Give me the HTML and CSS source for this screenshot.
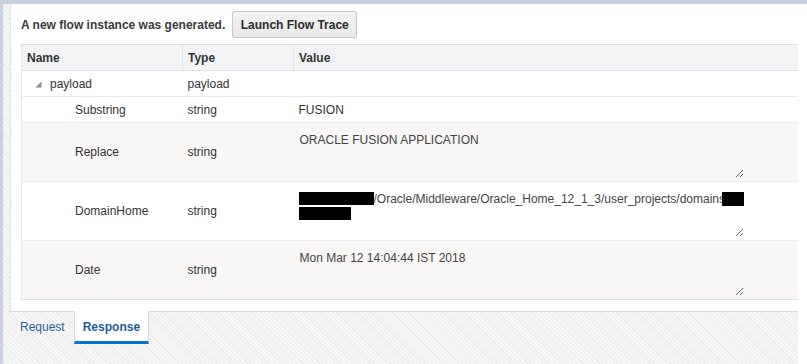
FILE: index.html
```html
<!DOCTYPE html>
<html>
<head>
<meta charset="utf-8">
<link rel="stylesheet" href="styles.css">
</head>
<body>
<div class="topband"></div>
<div class="page">
  <div class="rail"></div>
  <div class="workspace">
    <div class="panel">
      <div class="toolbar">
        <span class="msg">A new flow instance was generated.</span>
        <button class="btn">Launch Flow Trace</button>
      </div>
      <table class="grid">
        <colgroup><col class="c-name"><col class="c-type"><col class="c-value"></colgroup>
        <thead>
          <tr><th>Name</th><th>Type</th><th>Value</th></tr>
        </thead>
        <tbody>
          <tr class="short">
            <td><span class="tw"><svg width="7" height="7" viewBox="0 0 7 7"><polygon points="6.5,0.5 6.5,6.5 0.5,6.5" fill="#8c8c8c"/></svg></span><span class="pl">payload</span></td>
            <td>payload</td>
            <td></td>
          </tr>
          <tr class="short">
            <td class="child">Substring</td>
            <td>string</td>
            <td>FUSION</td>
          </tr>
          <tr class="tall alt">
            <td class="child">Replace</td>
            <td>string</td>
            <td class="val"><div class="ta">ORACLE FUSION APPLICATION</div></td>
          </tr>
          <tr class="tall">
            <td class="child">DomainHome</td>
            <td>string</td>
            <td class="val"><div class="ta"><span class="red r1"></span>/Oracle/Middleware/Oracle_Home_12_1_3/user_projects/domains<span class="red r2"></span> <span class="red r3"></span></div></td>
          </tr>
          <tr class="tall alt">
            <td class="child">Date</td>
            <td>string</td>
            <td class="val"><div class="ta">Mon Mar 12 14:04:44 IST 2018</div></td>
          </tr>
        </tbody>
      </table>
    </div>
    <div class="tabs">
      <div class="tab">Request</div>
      <div class="tab active">Response</div>
    </div>
  </div>
</div>
</body>
</html>
```

FILE: styles.css
```css
html, body {
  margin: 0;
  padding: 0;
  background: #ffffff;
  font-family: "Liberation Sans", Arial, sans-serif;
  font-size: 12px;
  color: #333333;
}
.topband {
  height: 4px;
  background: #c6d0e0;
}
.page {
  display: flex;
  height: 360px;
}
.rail {
  width: 3px;
  background: #c8d2e3;
}
.workspace {
  width: 795px;
  background: repeating-linear-gradient(45deg, #f6f6f6 0px, #f6f6f6 2px, #ebebeb 2px, #ebebeb 3px);
}
.panel {
  margin-left: 7px;
  background: #ffffff;
  border-left: 1px solid #dfe4e8;
  border-bottom: 1px solid #d5dde2;
  padding: 7px 0 11px 10px;
}
.toolbar {
  display: flex;
  align-items: center;
  gap: 7px;
  height: 27px;
  margin-bottom: 6px;
}
.msg {
  font-weight: bold;
  color: #3a3a3a;
}
.btn {
  height: 27px;
  width: 125px;
  padding: 0;
  white-space: nowrap;
  font-family: "Liberation Sans", Arial, sans-serif;
  font-size: 12px;
  font-weight: bold;
  color: #2b2b2b;
  background: linear-gradient(#f4f4f4, #e8e8e8);
  border: 1px solid #c6c9cc;
  border-radius: 2px;
}
.grid {
  width: 777px;
  border-collapse: collapse;
  table-layout: fixed;
  border-left: 1px solid #e3e7e8;
  border-bottom: 1px solid #dde3e3;
}
.c-name { width: 161px; }
.c-type { width: 111px; }
.grid th {
  height: 25px;
  text-align: left;
  font-weight: bold;
  color: #333;
  background: #f2f3f4;
  border-top: 1px solid #d9e2e2;
  border-bottom: 1px solid #d9e2e2;
  border-left: 1px solid #e1e7e7;
  padding: 0 5px;
}
.grid th:first-child { border-left: none; }
.grid td {
  padding: 0 5px;
  border-top: 1px solid #e8eaeb;
  vertical-align: middle;
  color: #333;
}
.grid tbody tr:first-child td { border-top: none; }
.grid tr.short td { height: 25px; }
.grid tr.tall td { height: 58px; }
.grid tr.alt td { background: #f8f7f5; }
.grid td.child { padding-left: 53px; }
.grid td.val { vertical-align: top; }
.tw {
  display: inline-block;
  margin-left: 8px;
  width: 7px;
}
.pl { margin-left: 8px; }
.ta {
  width: 445px;
  height: 48px;
  margin-top: 7px;
  padding: 3px 0 0 1px;
  box-sizing: border-box;
  color: #444;
  line-height: 15px;
  resize: both;
  overflow: hidden;
}
.red {
  display: inline-block;
  background: #000;
  height: 13px;
  vertical-align: -2px;
}
.r1 { width: 76px; margin-left: -2px; }
.r2 { width: 22px; margin-left: -3px; margin-right: -19px; vertical-align: -3px; height: 14px; }
.r3 { width: 54px; margin-left: -3px; }
.tabs {
  display: flex;
  margin-top: -1px;
  margin-left: 7px;
  height: 33px;
}
.tab {
  padding: 1px 10px 0 10px;
  display: flex;
  align-items: center;
  color: #2a64a0;
  height: 29px;
}
.tab:first-child { padding-right: 9px; }
.tab.active {
  padding: 1px 8px 0 8px;
  background: #ffffff;
  border-left: 1px solid #d5dbe0;
  border-right: 1px solid #d5dbe0;
  border-bottom: 3px solid #0572ce;
  font-weight: bold;
  color: #1d5c96;
}
```
